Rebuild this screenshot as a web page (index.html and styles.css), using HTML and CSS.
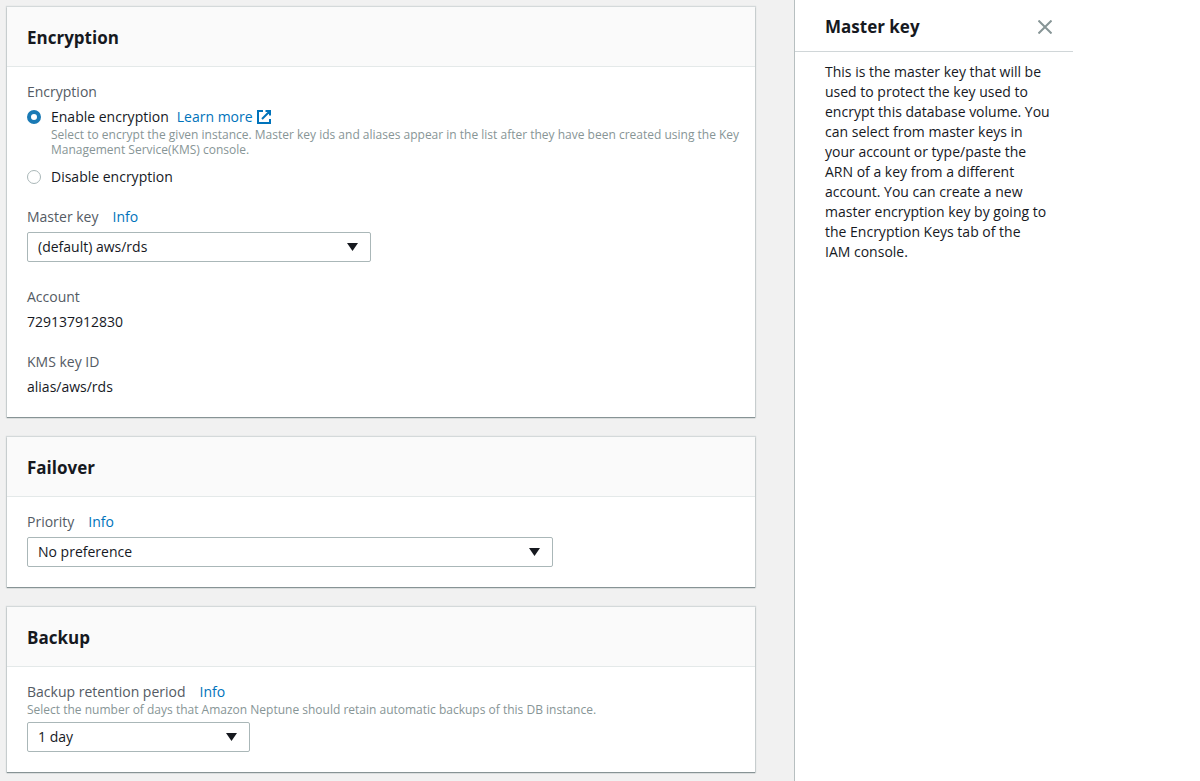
FILE: index.html
```
<!DOCTYPE html>
<html lang="en">
<head>
    <meta charset="utf-8">
    <meta name="viewport" content="width=device-width, initial-scale=1">
    <title>Encryption</title>
    <link rel="stylesheet" href="styles.css">
</head>
<body>

    <div class="layout">

      <main class="content">

        <section class="card">
          <header class="card-header">
            <h2>Encryption</h2>
          </header>
          <div class="card-body">
            <fieldset class="field">
              <legend class="label">Encryption</legend>
              <div class="option">
                <input type="radio" name="encryption" id="enc-on" aria-describedby="enc-hint" checked>
                <div>
                  <div class="option-title">
                    <label for="enc-on">Enable encryption</label>
                    <a class="external" href="#">Learn more
                      <svg width="14" height="14" viewBox="0 0 14 14" fill="none" stroke="currentColor" stroke-width="2" aria-hidden="true">
                        <path d="M6 1H1v12h12V9M8.5 1H13v4.5M13 1L5 9"/>
                      </svg>
                    </a>
                  </div>
                  <p class="hint" id="enc-hint">Select to encrypt the given instance. Master key ids and aliases appear in the list after they have been created using the Key Management Service(KMS) console.</p>
                </div>
              </div>
              <div class="option">
                <input type="radio" name="encryption" id="enc-off">
                <label for="enc-off">Disable encryption</label>
              </div>
            </fieldset>

            <div class="field">
              <div class="label-row">
                <label class="label" for="master-key">Master key</label>
                <a href="#help">Info</a>
              </div>
              <select class="select select-medium" id="master-key">
                <option>(default) aws/rds</option>
              </select>
            </div>

            <dl class="details">
              <div>
                <dt class="label">Account</dt>
                <dd>729137912830</dd>
              </div>
              <div>
                <dt class="label">KMS key ID</dt>
                <dd>alias/aws/rds</dd>
              </div>
            </dl>
          </div>
        </section>

        <section class="card">
          <header class="card-header">
            <h2>Failover</h2>
          </header>
          <div class="card-body">
            <div class="field">
              <div class="label-row">
                <label class="label" for="priority">Priority</label>
                <a href="#help">Info</a>
              </div>
              <select class="select select-large" id="priority">
                <option>No preference</option>
              </select>
            </div>
          </div>
        </section>

        <section class="card">
          <header class="card-header">
            <h2>Backup</h2>
          </header>
          <div class="card-body">
            <div class="field">
              <div>
                <div class="label-row">
                  <label class="label" for="retention">Backup retention period</label>
                  <a href="#help">Info</a>
                </div>
                <p class="hint" id="retention-hint">Select the number of days that Amazon Neptune should retain automatic backups of this DB instance.</p>
              </div>
              <select class="select select-small" id="retention" aria-describedby="retention-hint">
                <option>1 day</option>
              </select>
            </div>
          </div>
        </section>

      </main>

      <aside class="help" id="help">
        <header class="help-header">
          <h2>Master key</h2>
          <button class="close" type="button" aria-label="Close">
            <svg width="14" height="14" viewBox="0 0 14 14" fill="none" stroke="currentColor" stroke-width="2" aria-hidden="true">
              <path d="M.5.5l13 13M13.5.5l-13 13"/>
            </svg>
          </button>
        </header>
        <p class="help-text">This is the master key that will be used to protect the key used to encrypt this database volume. You can select from master keys in your account or type/paste the ARN of a key from a different account. You can create a new master encryption key by going to the Encryption Keys tab of the IAM&nbsp;console.</p>
      </aside>

    </div>

</body>
</html>
```
FILE: styles.css
```
* {
  box-sizing: border-box;
}

body {
  margin: 0;
  background: #f1f1f1;
  color: #16191f;
  font-family: "Open Sans", "Noto Sans", sans-serif;
  font-size: 14px;
  line-height: 20px;
}

h2, p, dl, dd, fieldset {
  margin: 0;
  padding: 0;
  border: 0;
}

h2 {
  font-size: 17px;
  line-height: 24px;
  font-weight: 700;
}

a {
  color: #0073bb;
  text-decoration: none;
}

.layout {
  display: flex;
  min-height: 100vh;
}

.content {
  flex: 1;
  min-width: 0;
  display: flex;
  flex-direction: column;
  gap: 20px;
  padding: 7px 39px 8px 7px;
}

/* cards */

.card {
  background: white;
  box-shadow: 0 1px 1px 0 #879395, 0 0 1px 1px #aab7b866;
}

.card-header {
  padding: 19px 20px 16px;
  background: #fafafa;
  border-bottom: 1px solid #e4e9e9;
}

.card-body {
  display: flex;
  flex-direction: column;
  gap: 20px;
  padding: 15px 10px 20px 20px;
}

/* form */

.field {
  display: flex;
  flex-direction: column;
  align-items: flex-start;
  gap: 5px;
}

.label {
  padding: 0;
  color: #545b64;
}

legend.label {
  margin-bottom: 5px;
}

.label-row {
  display: flex;
  gap: 14px;
}

.hint {
  color: #879596;
  font-size: 12px;
  line-height: 15px;
}

.option {
  display: flex;
  align-items: flex-start;
  gap: 10px;
}

.option + .option {
  margin-top: 5px;
}

.option-title {
  display: flex;
  gap: 8px;
}

.external {
  display: flex;
  align-items: center;
  gap: 4px;
}

input[type="radio"] {
  appearance: none;
  flex: none;
  width: 14px;
  height: 14px;
  margin: 3px 0;
  background: white;
  border: 1px solid #aab7b8;
  border-radius: 50%;
}

input[type="radio"]:checked {
  border: 4px solid #1a7ab5;
}

.select {
  appearance: none;
  max-width: 100%;
  height: 30px;
  padding: 0 30px 0 10px;
  background: white url("data:image/svg+xml,%3Csvg xmlns='http://www.w3.org/2000/svg' width='11' height='8'%3E%3Cpath d='M0 0h11L5.5 8z' fill='%2316191f'/%3E%3C/svg%3E") no-repeat right 12px center;
  border: 1px solid #aab7b8;
  border-radius: 2px;
  color: inherit;
  font: inherit;
}

.select-small {
  width: 223px;
}

.select-medium {
  width: 344px;
}

.select-large {
  width: 526px;
}

.details {
  display: flex;
  flex-direction: column;
  gap: 20px;
  padding-top: 5px;
}

.details dd {
  margin-top: 5px;
}

/* help panel */

.help {
  flex: 0 0 406px;
  background: white;
  border-left: 1px solid #b7bfc0;
}

.help-header {
  display: flex;
  align-items: center;
  justify-content: space-between;
  max-width: 278px;
  padding: 15px 20px 12px 30px;
  border-bottom: 1px solid #d0d6d8;
}

.help-text {
  max-width: 278px;
  padding: 10px 22px 10px 30px;
}

.close {
  display: flex;
  padding: 1px;
  background: none;
  border: 0;
  color: #879596;
}
```
